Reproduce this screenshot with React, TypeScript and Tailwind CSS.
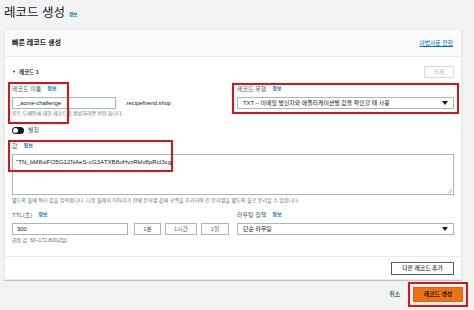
import React from 'react'

const Info = () => (
  <span className="ml-[6px] text-[5px] text-[#0073bb] font-bold">정보</span>
)

const Caret = () => (
  <svg width="6" height="4" viewBox="0 0 6 4" className="shrink-0">
    <path d="M0 0h6L3 4z" fill="#16191f" />
  </svg>
)

const Field = ({ label, children }: { label: string; children: React.ReactNode }) => (
  <div className="flex flex-col">
    <div className="h-[10px] flex items-center text-[6px] text-[#545b64]">
      {label}
      <Info />
    </div>
    <div className="mt-[3px]">{children}</div>
  </div>
)

const Select = ({ value }: { value: string }) => (
  <div className="h-[12px] border border-[#aab7b8] bg-white flex items-center justify-between pl-[5px] pr-[5px] text-[5.9px] text-[#16191f]">
    <span>{value}</span>
    <Caret />
  </div>
)

const SmallBtn = ({ children, className = '' }: { children: React.ReactNode; className?: string }) => (
  <div
    className={`h-[12px] border border-[#aab7b8] bg-white flex items-center justify-center text-[5.8px] text-[#545b64] ${className}`}
  >
    {children}
  </div>
)

export default function App() {
  return (
    <div className="relative w-[474px] h-[310px] overflow-hidden bg-[#f2f3f3] px-[4px] font-['Liberation_Sans','Noto_Sans_CJK_KR',sans-serif] text-[#16191f]">
      {/* page title */}
      <div className="h-[29px] flex items-start pt-[3px]">
        <h1 className="text-[12.5px] leading-[20px] text-[#16191f]">레코드 생성</h1>
        <span className="ml-[4px] mt-[9px] text-[4.5px] text-[#0073bb] font-bold">정보</span>
      </div>

      {/* card */}
      <div className="w-[458px] h-[251px] bg-white border border-[#eaeded] shadow-[0_1px_1px_rgba(0,28,36,0.2)] flex flex-col">
        <div className="h-[27px] shrink-0 bg-[#fafafa] border-b border-[#eaeded] flex items-center justify-between px-[7px]">
          <span className="text-[7px] font-bold">빠른 레코드 생성</span>
          <span className="text-[5.8px] text-[#0073bb] underline mr-[1px]">마법사로 전환</span>
        </div>

        <div className="flex-1 flex flex-col px-[7px] pt-[9px]">
          {/* record header */}
          <div className="h-[12px] flex items-center justify-between">
            <span className="text-[5.5px] font-bold flex items-center gap-[3px]">
              <span className="text-[4px]">▼</span>레코드 1
            </span>
            <div className="w-[30px] h-[12px] border border-[#d5dbdb] flex items-center justify-center text-[5.5px] text-[#aab7b8]">
              삭제
            </div>
          </div>

          <div className="grid grid-cols-2 gap-x-[8px] mt-[6px]">
            <div className="flex flex-col">
              <Field label="레코드 이름">
                <div className="flex items-center">
                  <div className="w-[104px] h-[12px] border border-[#aab7b8] flex items-center pl-[4px] text-[5.8px]">
                    _acme-challenge
                  </div>
                  <span className="ml-[9px] text-[5.8px]">.recipefriend.shop</span>
                </div>
              </Field>
              <div className="mt-[1px] h-[8px] flex items-center text-[5px] text-[#687078]">
                루트 도메인에 대한 레코드를 생성하려면 비워 둡니다.
              </div>
            </div>
            <Field label="레코드 유형">
              <Select value="TXT – 이메일 발신자와 애플리케이션별 값을 확인할 때 사용" />
            </Field>
          </div>

          {/* alias toggle */}
          <div className="mt-[7px] h-[10px] flex items-center gap-[4px]">
            <div className="w-[12px] h-[7px] rounded-full bg-[#16191f] flex items-center pl-[1px]">
              <div className="w-[5px] h-[5px] rounded-full bg-white" />
            </div>
            <span className="text-[6px] text-[#545b64]">별칭</span>
          </div>

          {/* value */}
          <div className="mt-[6px] h-[10px] flex items-center text-[6px] text-[#545b64]">
            값
            <Info />
          </div>
          <div className="relative mt-[3px] h-[41px] border border-[#aab7b8] px-[3px] pt-[2px] text-[6.2px] leading-[10px]">
            "TN_bM8oiFO5G12NAeS-cG3ATXB8oHvzRklv8pRcl3cg"
            <svg width="4" height="4" viewBox="0 0 4 4" className="absolute right-[1px] bottom-[1px]">
              <path d="M4 0L0 4M4 2L2 4" stroke="#879596" strokeWidth="0.6" />
            </svg>
          </div>
          <div className="mt-[2px] h-[8px] flex items-center text-[5.1px] text-[#687078] whitespace-nowrap">
            별도의 줄에 여러 값을 입력합니다. 다음 줄에서 이어가기 전에 문자열 끝에 공백을 추가하여 긴 문자열을 별도의 줄로 분리할 수 있습니다.
          </div>

          {/* ttl / routing */}
          <div className="grid grid-cols-2 gap-x-[8px] mt-[5px]">
            <div className="flex flex-col">
              <Field label="TTL(초)">
                <div className="flex items-center">
                  <div className="w-[116px] h-[12px] border border-[#aab7b8] flex items-center pl-[4px] text-[5.8px]">
                    300
                  </div>
                  <SmallBtn className="w-[27px] ml-[6px]">1분</SmallBtn>
                  <SmallBtn className="w-[32px] ml-[4px]">1시간</SmallBtn>
                  <SmallBtn className="w-[28px] ml-[4px]">1일</SmallBtn>
                </div>
              </Field>
              <div className="mt-[2px] h-[8px] flex items-center text-[5px] text-[#687078]">
                권장 값: 60~172,800(2일)
              </div>
            </div>
            <Field label="라우팅 정책">
              <Select value="단순 라우팅" />
            </Field>
          </div>
        </div>

        <div className="border-t border-[#eaeded] h-[23px] shrink-0 flex items-start justify-end px-[7px] pt-[5px]">
          <div className="w-[63px] h-[13px] border border-[#545b64] flex items-center justify-center text-[5.8px] font-bold text-[#545b64]">
            다른 레코드 추가
          </div>
        </div>
      </div>

      {/* footer */}
      <div className="w-[459px] flex items-center justify-end mt-[7px]">
        <span className="text-[5.8px] font-bold text-[#545b64] mr-[13px]">취소</span>
        <div className="w-[50px] h-[15px] bg-[#ec7211] border border-[#eb5f07] flex items-center justify-center text-[5.8px] font-bold text-[#16191f]">
          레코드 생성
        </div>
      </div>

      {/* highlight boxes */}
      <div className="absolute left-[8px] top-[82px] w-[61px] h-[42px] border-[2.5px] border-[#d8141d]" />
      <div className="absolute left-[232px] top-[83px] w-[227px] h-[31px] border-[2.5px] border-[#d8141d]" />
      <div className="absolute left-[8px] top-[140px] w-[165px] h-[32px] border-[2.5px] border-[#d8141d]" />
      <div className="absolute left-[408px] top-[282px] w-[60px] h-[25px] border-[2.5px] border-[#d8141d]" />
    </div>
  )
}
